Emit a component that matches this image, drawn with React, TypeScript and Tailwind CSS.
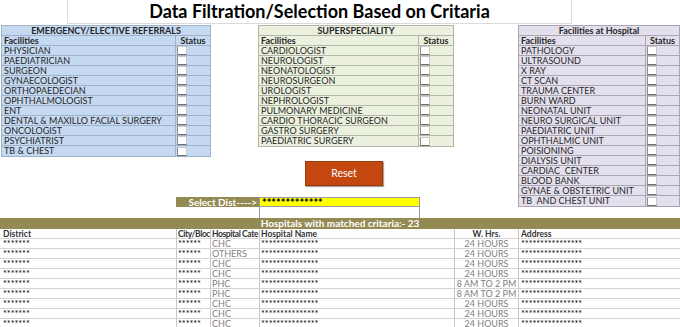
import React from 'react'

const emergency = [
  'PHYSICIAN',
  'PAEDIATRICIAN',
  'SURGEON',
  'GYNAECOLOGIST',
  'ORTHOPAEDECIAN',
  'OPHTHALMOLOGIST',
  'ENT',
  'DENTAL & MAXILLO FACIAL SURGERY',
  'ONCOLOGIST',
  'PSYCHIATRIST',
  'TB & CHEST',
]

const superSpeciality = [
  'CARDIOLOGIST',
  'NEUROLOGIST',
  'NEONATOLOGIST',
  'NEUROSURGEON',
  'UROLOGIST',
  'NEPHROLOGIST',
  'PULMONARY MEDICINE',
  'CARDIO THORACIC SURGEON',
  'GASTRO SURGERY',
  'PAEDIATRIC SURGERY',
]

const hospitalFacilities = [
  'PATHOLOGY',
  'ULTRASOUND',
  'X RAY',
  'CT SCAN',
  'TRAUMA CENTER',
  'BURN WARD',
  'NEONATAL UNIT',
  'NEURO SURGICAL UNIT',
  'PAEDIATRIC UNIT',
  'OPHTHALMIC UNIT',
  'POISIONING',
  'DIALYSIS UNIT',
  'CARDIAC  CENTER',
  'BLOOD BANK',
  'GYNAE & OBSTETRIC UNIT',
  'TB  AND CHEST UNIT',
]

const results = [
  { cat: 'CHC', hrs: '24 HOURS' },
  { cat: 'OTHERS', hrs: '24 HOURS' },
  { cat: 'CHC', hrs: '24 HOURS' },
  { cat: 'CHC', hrs: '24 HOURS' },
  { cat: 'PHC', hrs: '8 AM TO 2 PM' },
  { cat: 'PHC', hrs: '8 AM TO 2 PM' },
  { cat: 'CHC', hrs: '24 HOURS' },
  { cat: 'CHC', hrs: '24 HOURS' },
  { cat: 'CHC', hrs: '24 HOURS' },
]

function Checkbox() {
  return (
    <span className="block h-[9px] w-[10px] border border-[#c8c8c8] border-b-[#6f6f6f] border-l-[#8c8c8c] bg-white" />
  )
}

type TableProps = {
  title: string
  items: string[]
  className: string
  line: string
  statusW: string
}

function FacilityTable({ title, items, className, line, statusW }: TableProps) {
  return (
    <div className={`flex flex-col border ${line} ${className}`}>
      <div className={`h-[10px] border-b ${line} text-center font-bold leading-[10px]`}>{title}</div>
      <div className={`flex h-[10px] border-b ${line} font-bold leading-[10px]`}>
        <div className={`flex-1 border-r ${line} pl-[2px]`}>Facilities</div>
        <div className={`${statusW} text-center`}>Status</div>
      </div>
      {items.map((item) => (
        <div key={item} className={`flex h-[10px] border-b ${line} leading-[10px] last:border-b-0`}>
          <div className={`flex-1 whitespace-pre border-r ${line} pl-[2px]`}>{item}</div>
          <div className={`${statusW} flex items-center pl-[1px]`}>
            <Checkbox />
          </div>
        </div>
      ))}
    </div>
  )
}

export default function App() {
  return (
    <div className="h-[327px] w-[680px] overflow-hidden bg-white font-['Lato','Open_Sans',sans-serif] text-[9px] text-[#262626]">
      {/* Titre */}
      <div className="flex h-[25px]">
        <div className="ml-[67px] flex h-[24px] w-[505px] items-center justify-center border-x border-b border-[#dadada] text-[18px] font-bold text-black">
          Data Filtration/Selection Based on Critaria
        </div>
      </div>

      <div className="flex">
        <div className="flex w-[518px] flex-col">
          <div className="flex items-start">
            <div className="ml-[1px] w-[210px]">
              <FacilityTable
                title="EMERGENCY/ELECTIVE REFERRALS"
                items={emergency}
                className="bg-[#c5d9f1]"
                line="border-[#9fb2c9]"
                statusW="w-[34px]"
              />
            </div>
            <div className="ml-[47px] w-[196px]">
              <FacilityTable
                title="SUPERSPECIALITY"
                items={superSpeciality}
                className="bg-[#ebf1de]"
                line="border-[#b2b8a6]"
                statusW="w-[34px]"
              />
            </div>
          </div>

          <button className="ml-[305px] mt-[4px] h-[25px] w-[78px] border border-[#9c3a0c] bg-[#c4470f] text-[10.5px] text-white shadow-[1px_1px_1px_rgba(0,0,0,0.35)]">
            Reset
          </button>

          <div className="ml-[176px] mt-[11px] flex h-[10px] leading-[10px]">
            <div className="w-[83px] bg-[#948a54] pr-[2px] text-right text-[10px] font-bold text-white">
              Select Dist----&gt;
            </div>
            <div className="w-[161px] border border-[#9a9a9a] bg-[#ffff00] pl-[2px] text-[11px] font-bold leading-[9px] text-black">
              *************
            </div>
          </div>
          <div className="ml-[259px] h-[11px] w-[161px] border-x border-[#9a9a9a]" />
        </div>

        <div className="w-[162px]">
          <FacilityTable
            title="Facilities at Hospital"
            items={hospitalFacilities}
            className="bg-[#e4dfec]"
            line="border-[#aba6b5]"
            statusW="w-[33px]"
          />
        </div>
      </div>

      {/* Résultats */}
      <div className="h-[11px] bg-[#948a54] text-center text-[10px] font-bold leading-[11px] text-white">
        Hospitals with matched critaria:- 23
      </div>
      <div className="grid h-[10px] grid-cols-[176px_34px_49px_195px_64px_1fr] border-b border-[#d4d4d4] text-[8.5px] font-bold leading-[10px] text-[#333]">
        <div className="pl-[3px]">District</div>
        <div className="whitespace-nowrap border-l border-[#c8c8c8] pl-[1px] tracking-[-0.4px]">City/Bloc</div>
        <div className="whitespace-nowrap border-l border-[#c8c8c8] pl-[1px] tracking-[-0.4px]">Hospital Cate</div>
        <div className="border-l border-[#c8c8c8] pl-[1px]">Hospital Name</div>
        <div className="border-l border-[#c8c8c8] text-center">W. Hrs.</div>
        <div className="border-l border-[#c8c8c8] pl-[2px]">Address</div>
      </div>
      {results.map((r, i) => (
        <div
          key={i}
          className="grid h-[10px] grid-cols-[176px_34px_49px_195px_64px_1fr] border-b border-[#d4d4d4] text-[9px] leading-[9px]"
        >
          <div className="pl-[3px] text-black">*******</div>
          <div className="border-l border-[#c8c8c8] pl-[1px] text-black">******</div>
          <div className="border-l border-[#c8c8c8] pl-[1px] text-[#7f7f7f]">{r.cat}</div>
          <div className="border-l border-[#c8c8c8] pl-[1px] text-black">***************</div>
          <div className="border-l border-[#c8c8c8] text-center text-[#7f7f7f]">{r.hrs}</div>
          <div className="border-l border-[#c8c8c8] pl-[2px] text-black">****************</div>
        </div>
      ))}
    </div>
  )
}
